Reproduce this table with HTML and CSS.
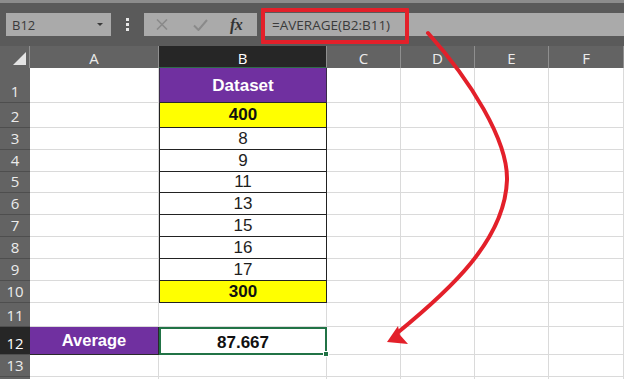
FILE: index.html
```html
<!DOCTYPE html>
<html>
<head>
<meta charset="utf-8">
<link rel="stylesheet" href="styles.css">
</head>
<body>
<div class="app">
  <div class="toolbar">
    <div class="namebox"><span class="ref">B12</span><span class="caret"></span></div>
    <div class="grip"><i></i><i></i><i></i></div>
    <div class="fnbox">
      <svg class="ic-x" width="12" height="11" viewBox="0 0 12 11"><path d="M1 0.5 L11 10.5 M11 0.5 L1 10.5" stroke="#8a8a8a" stroke-width="1.6" fill="none"/></svg>
      <svg class="ic-ok" width="15" height="12" viewBox="0 0 15 12"><path d="M1 6.5 L5.5 11 L14 1" stroke="#8a8a8a" stroke-width="2" fill="none"/></svg>
      <span class="fx">fx</span>
    </div>
    <div class="formula"><span class="ftext">=AVERAGE(B2:B11)</span></div>
    <div class="highlight"></div>
  </div>

  <div class="sheet">
    <div class="corner"><span class="tri"></span></div>
    <div class="ch">A</div><div class="ch sel">B</div><div class="ch">C</div><div class="ch">D</div><div class="ch">E</div><div class="ch">F</div>

    <div class="rh">1</div><div class="c"></div><div class="c head">Dataset</div><div class="c"></div><div class="c"></div><div class="c"></div><div class="c"></div>
    <div class="rh">2</div><div class="c"></div><div class="c box yellow">400</div><div class="c"></div><div class="c"></div><div class="c"></div><div class="c"></div>
    <div class="rh">3</div><div class="c"></div><div class="c box">8</div><div class="c"></div><div class="c"></div><div class="c"></div><div class="c"></div>
    <div class="rh">4</div><div class="c"></div><div class="c box">9</div><div class="c"></div><div class="c"></div><div class="c"></div><div class="c"></div>
    <div class="rh">5</div><div class="c"></div><div class="c box">11</div><div class="c"></div><div class="c"></div><div class="c"></div><div class="c"></div>
    <div class="rh">6</div><div class="c"></div><div class="c box">13</div><div class="c"></div><div class="c"></div><div class="c"></div><div class="c"></div>
    <div class="rh">7</div><div class="c"></div><div class="c box">15</div><div class="c"></div><div class="c"></div><div class="c"></div><div class="c"></div>
    <div class="rh">8</div><div class="c"></div><div class="c box">16</div><div class="c"></div><div class="c"></div><div class="c"></div><div class="c"></div>
    <div class="rh">9</div><div class="c"></div><div class="c box">17</div><div class="c"></div><div class="c"></div><div class="c"></div><div class="c"></div>
    <div class="rh">10</div><div class="c"></div><div class="c box yellow">300</div><div class="c"></div><div class="c"></div><div class="c"></div><div class="c"></div>
    <div class="rh">11</div><div class="c"></div><div class="c"></div><div class="c"></div><div class="c"></div><div class="c"></div><div class="c"></div>
    <div class="rh sel">12</div><div class="c label">Average</div><div class="c active">87.667<span class="handle"></span></div><div class="c"></div><div class="c"></div><div class="c"></div><div class="c"></div>
    <div class="rh">13</div><div class="c"></div><div class="c"></div><div class="c"></div><div class="c"></div><div class="c"></div><div class="c"></div>
    <div class="rh"></div><div class="c"></div><div class="c"></div><div class="c"></div><div class="c"></div><div class="c"></div><div class="c"></div>
  </div>

  <svg class="arrow" width="624" height="379" viewBox="0 0 624 379">
    <path d="M428 33 C470 80 508 140 507 180 C505 240 450 290 396 334" stroke="#e3202a" stroke-width="4" fill="none" stroke-linecap="round"/>
    <polygon points="387,342 398,326 400,335 408,344" fill="#e3202a"/>
  </svg>
</div>
</body>
</html>
```

FILE: styles.css
```css
* { box-sizing: border-box; }
html, body { margin: 0; padding: 0; }
body {
  width: 624px;
  height: 379px;
  overflow: hidden;
  background: #ffffff;
  font-family: "Open Sans", "Noto Sans", sans-serif;
}
.app { position: relative; width: 624px; height: 379px; overflow: hidden; }

.toolbar {
  position: relative;
  height: 46px;
  background: #5a5a5a;
  border-top: 3px solid #8c8c8c;
  display: flex;
  align-items: flex-start;
  padding: 10px 0 0 6px;
}
.namebox {
  width: 105px;
  height: 23px;
  background: #aaaaaa;
  display: flex;
  align-items: center;
  justify-content: space-between;
  padding: 0 8px 0 6px;
  color: #3a3a3a;
  font-size: 13px;
}
.caret {
  width: 0; height: 0;
  border-left: 3px solid transparent;
  border-right: 3px solid transparent;
  border-top: 3px solid #3a3a3a;
}
.grip {
  width: 33px;
  height: 23px;
  display: flex;
  flex-direction: column;
  align-items: center;
  justify-content: center;
  gap: 2px;
}
.grip i { display: block; width: 3px; height: 3px; background: #e8e8e8; }
.fnbox {
  width: 113px;
  height: 23px;
  background: #aaaaaa;
  display: flex;
  align-items: center;
  padding-left: 12px;
}
.ic-x { margin-right: 25px; }
.ic-ok { margin-right: 22px; }
.fx {
  font-family: "Liberation Serif", serif;
  font-style: italic;
  font-size: 16px;
  font-weight: bold;
  color: #333;
  letter-spacing: -0.5px;
}
.formula {
  flex: 1;
  height: 23px;
  margin-left: 8px;
  background: #aaaaaa;
  display: flex;
  align-items: center;
  padding-left: 7px;
}
.ftext { color: #3a3a3a; font-size: 13.5px; }
.highlight {
  position: absolute;
  left: 261px;
  top: 5px;
  width: 148px;
  height: 36px;
  border: 4px solid #e3202a;
  border-radius: 1px;
}

.sheet {
  display: grid;
  grid-template-columns: 30px 129px 168px 74px 74px 74px 75px;
  grid-template-rows: 22px 35px 25px 22px 22px 21px 22px 22px 22px 22px 22px 24px 28px 22px 22px;
}
.corner {
  background: #636363;
  border-right: 1px solid #8f8f8f;
  position: relative;
}
.tri {
  position: absolute;
  right: 3px;
  bottom: 3px;
  width: 0; height: 0;
  border-left: 13px solid transparent;
  border-bottom: 13px solid #e4e4e4;
}
.ch {
  background: #636363;
  color: #ececec;
  font-size: 15px;
  display: flex;
  align-items: center;
  justify-content: center;
  border-right: 1px solid #8f8f8f;
  padding-top: 2px;
}
.ch.sel { background: #262626; border-bottom: 1px solid #2f6b4a; color: #ffffff; }
.rh {
  background: #636363;
  color: #ececec;
  font-size: 15px;
  line-height: 15px;
  display: flex;
  align-items: flex-end;
  justify-content: center;
  padding-bottom: 3px;
  border-bottom: 1px solid #4e4e4e;
}
.rh.sel { background: #262626; color: #ffffff; }

.c {
  border-right: 1px solid #dadada;
  border-bottom: 1px solid #dadada;
  display: flex;
  align-items: center;
  justify-content: center;
  font-family: "Liberation Sans", Arial, sans-serif;
  font-size: 17px;
  color: #1e1e1e;
  position: relative;
}
.head {
  background: #7030a0;
  color: #ffffff;
  font-weight: bold;
  border-left: 1px solid #3a2a48;
  border-right: 1px solid #3a2a48;
  border-bottom: 1px solid #2a2a2a;
  padding-top: 1px;
}
.box {
  border-left: 1px solid #222;
  border-right: 1px solid #222;
  border-bottom: 1px solid #222;
}
.yellow { background: #ffff00; font-weight: bold; color: #111; }
.label {
  background: #7030a0;
  color: #ffffff;
  font-weight: bold;
  font-size: 16.5px;
  border-right: 1px solid #2a2a2a;
  border-bottom: 1px solid #2a2a2a;
}
.active {
  border: 2px solid #217346;
  font-weight: bold;
  color: #111;
  padding-top: 3px;
}
.handle {
  position: absolute;
  right: -4px;
  bottom: -4px;
  width: 6px;
  height: 6px;
  background: #217346;
  border: 1px solid #ffffff;
  z-index: 2;
}
.arrow { position: absolute; left: 0; top: 0; pointer-events: none; }
```
